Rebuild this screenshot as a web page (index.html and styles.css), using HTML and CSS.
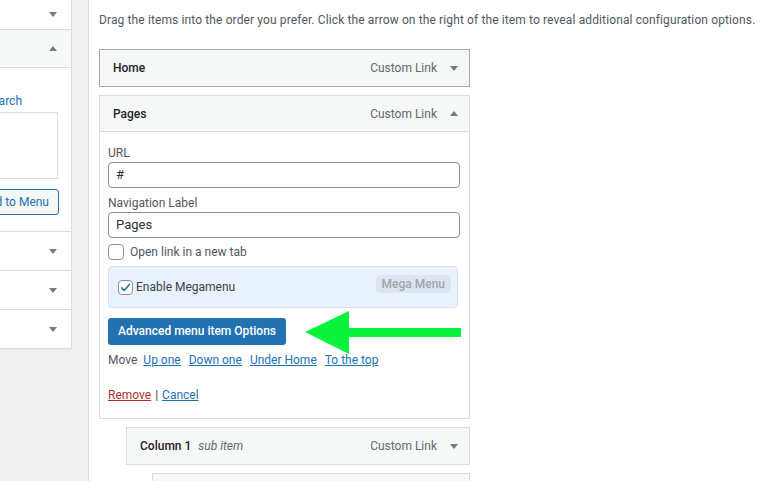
FILE: index.html
```html
<!DOCTYPE html>
<html lang="en">
<head>
<meta charset="utf-8">
<title>Menu structure</title>
<link rel="stylesheet" href="styles.css">
</head>
<body>
<div class="page">
  <aside class="side">
    <div class="panel">
      <div class="prow first"><span class="tri down"></span></div>
      <div class="prow phead"><span class="tri up"></span></div>
      <div class="pbody">
        <a class="plink" href="#">Search</a>
        <div class="parea"></div>
        <span class="pbtn">Add to Menu</span>
      </div>
      <div class="prow"><span class="tri down"></span></div>
      <div class="prow"><span class="tri down"></span></div>
      <div class="prow"><span class="tri down"></span></div>
    </div>
  </aside>
  <main class="main">
    <p class="desc">Drag the items into the order you prefer. Click the arrow on the right of the item to reveal additional configuration options.</p>
    <div class="menu">
      <div class="item home">
        <div class="ihead"><span class="ititle">Home</span><span class="itype">Custom Link</span><span class="tri down"></span></div>
      </div>
      <div class="item open">
        <div class="ihead"><span class="ititle">Pages</span><span class="itype">Custom Link</span><span class="tri up"></span></div>
        <div class="ibody">
          <label class="flabel">URL</label>
          <div class="finput">#</div>
          <label class="flabel gap">Navigation Label</label>
          <div class="finput">Pages</div>
          <div class="crow"><span class="cbox"></span><span class="ctext">Open link in a new tab</span></div>
          <div class="mega">
            <span class="cbox small checked"><svg viewBox="0 0 16 16" width="13" height="13"><path d="M3.2 8.4 L6.4 11.6 L12.8 4.2" fill="none" stroke="#2271b1" stroke-width="2" stroke-linecap="round" stroke-linejoin="round"/></svg></span>
            <span class="mtext">Enable Megamenu</span>
            <span class="mtag">Mega Menu</span>
          </div>
          <div class="adv">Advanced menu item Options</div>
          <div class="move"><span class="mlabel">Move</span><a href="#">Up one</a><a href="#">Down one</a><a href="#">Under Home</a><a href="#">To the top</a></div>
          <div class="actions"><a class="remove" href="#">Remove</a><span class="sep">|</span><a href="#">Cancel</a></div>
        </div>
      </div>
      <div class="item depth1">
        <div class="ihead"><span class="ititle">Column 1</span><span class="isub">sub item</span><span class="itype">Custom Link</span><span class="tri down"></span></div>
      </div>
      <div class="item depth2">
        <div class="ihead"></div>
      </div>
    </div>
  </main>
  <svg class="pointer" width="768" height="481" viewBox="0 0 768 481">
    <polygon points="305,332 349,311 349,328 461,328 461,337 349,337 349,354" fill="#0af23c"/>
  </svg>
</div>
</body>
</html>
```
FILE: styles.css
```css
* { box-sizing: border-box; }
html, body { margin: 0; padding: 0; }
body {
  font-family: Roboto, "Noto Sans", "Liberation Sans", sans-serif;
  font-size: 12px;
  color: #3c434a;
}
a { color: #2271b1; }
.page {
  position: relative;
  display: flex;
  width: 768px;
  height: 481px;
  overflow: hidden;
  background: #f0f0f1;
}
.side {
  width: 88px;
  flex: none;
}
.panel {
  width: 72px;
  background: #fff;
  border-right: 1px solid #dcdcde;
  border-bottom: 1px solid #dcdcde;
  box-shadow: 0 1px 1px rgba(0,0,0,0.04);
  overflow: hidden;
}
.prow {
  height: 39px;
  border-bottom: 1px solid #dcdcde;
  display: flex;
  align-items: center;
  justify-content: flex-end;
  padding-right: 14px;
}
.prow.first { height: 30px; }
.prow.phead { height: 38px; background: #f6f7f7; }
.prow:last-child { border-bottom: 0; height: 38px; }
.pbody {
  height: 164px;
  border-bottom: 1px solid #dcdcde;
  display: flex;
  flex-direction: column;
  align-items: flex-end;
  padding-top: 24px;
}
.plink {
  display: block;
  line-height: 18px;
  margin-right: 49px;
  text-decoration: none;
  white-space: nowrap;
}
.parea {
  width: 220px;
  height: 67px;
  margin-top: 2px;
  margin-right: 13px;
  border: 1px solid #dcdcde;
  flex: none;
}
.pbtn {
  display: block;
  flex: none;
  white-space: nowrap;
  margin-top: 10px;
  margin-right: 12px;
  height: 26px;
  line-height: 24px;
  padding: 0 9px;
  border: 1px solid #2271b1;
  border-radius: 3px;
  color: #2271b1;
  background: #f6f7f7;
}
.tri {
  display: inline-block;
  width: 0;
  height: 0;
  border-left: 4px solid transparent;
  border-right: 4px solid transparent;
  flex: none;
}
.tri.down { border-top: 5px solid #787c82; }
.tri.up { border-bottom: 5px solid #787c82; }

.main {
  flex: 1;
  background: #fff;
  border-left: 1px solid #dcdcde;
  padding: 11px 0 0 10px;
}
.desc {
  margin: 0 0 20px 0;
  line-height: 18px;
  color: #50575e;
  white-space: nowrap;
  letter-spacing: 0.12px;
}
.menu {
  width: 371px;
}
.item {
  margin-bottom: 8px;
  border: 1px solid #dcdcde;
  background: #fff;
}
.item.home { border-color: #a7aaad; }
.item.depth1 { margin-left: 27px; }
.item.depth2 { margin-left: 53px; }
.ihead {
  height: 36px;
  display: flex;
  align-items: center;
  padding: 0 11px 0 13px;
  background: #f6f7f7;
}
.open .ihead { border-bottom: 1px solid #dcdcde; }
.ititle {
  font-weight: 500;
  color: #1d2327;
}
.isub {
  margin-left: 7px;
  font-style: italic;
  color: #646970;
}
.itype {
  margin-left: auto;
  margin-right: 13px;
  color: #646970;
}
.ibody {
  padding: 12px 9px 14px 8px;
}
.flabel {
  display: block;
  line-height: 18px;
  color: #50575e;
}
.flabel.gap { margin-top: 6px; }
.finput {
  height: 26px;
  border: 1px solid #8c8f94;
  border-radius: 4px;
  padding: 0 7px;
  line-height: 24px;
  font-size: 13px;
  color: #2c3338;
}
.crow {
  display: flex;
  align-items: center;
  margin-top: 6px;
  height: 16px;
}
.cbox {
  width: 16px;
  height: 16px;
  border: 1px solid #8c8f94;
  border-radius: 4px;
  background: #fff;
  flex: none;
  display: flex;
  align-items: center;
  justify-content: center;
}
.cbox.small { width: 15px; height: 15px; }
.ctext {
  margin-left: 6px;
  color: #50575e;
  line-height: 18px;
}
.mega {
  margin-top: 6px;
  margin-right: 2px;
  height: 42px;
  display: flex;
  align-items: center;
  padding: 0 6px 0 9px;
  background: #e9f1fc;
  border: 1px solid #d5e2f4;
  border-radius: 4px;
}
.mtext {
  margin-left: 3px;
  color: #3c434a;
}
.mtag {
  margin-left: auto;
  margin-bottom: 6px;
  height: 18px;
  line-height: 18px;
  padding: 0 6px;
  border-radius: 4px;
  background: #dde6f0;
  color: #a0a5aa;
  font-weight: 500;
}
.adv {
  display: inline-block;
  margin-top: 10px;
  height: 27px;
  line-height: 27px;
  padding: 0 10px;
  background: #2271b1;
  color: #fff;
  border-radius: 3px;
  font-weight: 500;
}
.move {
  margin-top: 6px;
  line-height: 18px;
  display: flex;
  gap: 8px;
}
.mlabel { color: #50575e; margin-right: -2px; }
.actions {
  margin-top: 17px;
  line-height: 18px;
}
.remove { color: #b32d2e; }
.sep { margin: 0 4px; color: #3c434a; }
.pointer {
  position: absolute;
  left: 0;
  top: 0;
  pointer-events: none;
}
```
